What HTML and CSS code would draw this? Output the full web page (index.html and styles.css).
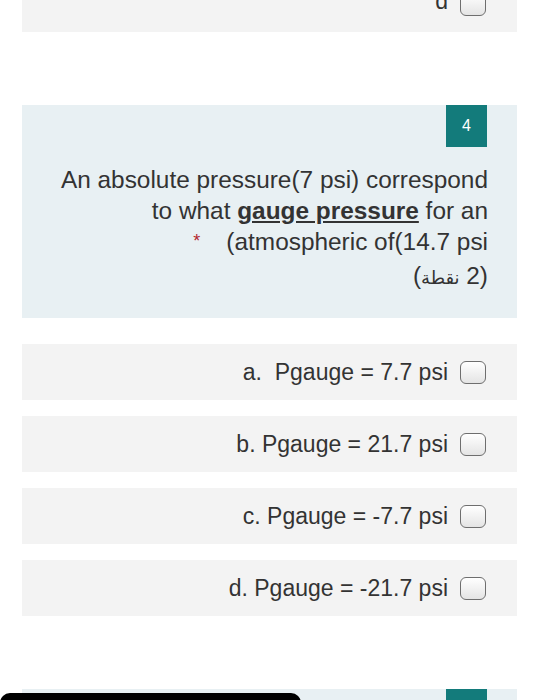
FILE: index.html
```html
<!DOCTYPE html>
<html lang="en">
<head>
<meta charset="utf-8">
<link rel="stylesheet" href="styles.css">
</head>
<body>
<div class="page">
  <div class="card option prev">
    <span class="label">d</span>
    <span class="box"></span>
  </div>

  <div class="card question">
    <div class="badge">4</div>
    <div class="qtext">
      <div>An absolute pressure(7 psi) correspond</div>
      <div>to what <b class="u">gauge pressure</b> for an</div>
      <div><span class="req">*</span>(atmospheric of(14.7 psi</div>
      <div>(<bdi class="ar">نقطة</bdi> 2)</div>
    </div>
  </div>

  <div class="options">
    <div class="card option"><span class="label">a.&nbsp; Pgauge = 7.7 psi</span><span class="box"></span></div>
    <div class="card option"><span class="label">b. Pgauge = 21.7 psi</span><span class="box"></span></div>
    <div class="card option"><span class="label">c. Pgauge = -7.7 psi</span><span class="box"></span></div>
    <div class="card option"><span class="label">d. Pgauge = -21.7 psi</span><span class="box"></span></div>
  </div>

  <div class="card question next">
    <div class="badge"></div>
  </div>
</div>
<div class="homebar"></div>
</body>
</html>
```

FILE: styles.css
```css
html, body {
  margin: 0;
  padding: 0;
  background: #ffffff;
  overflow: hidden;
}
body {
  font-family: "Liberation Sans", Arial, "Noto Sans", sans-serif;
  color: #333333;
  height: 700px;
  position: relative;
}
.page {
  padding: 0 22px;
  display: flex;
  flex-direction: column;
}
.card {
  background: #f3f3f3;
}
.option {
  height: 56px;
  display: flex;
  align-items: center;
  justify-content: flex-end;
  padding-right: 31px;
  gap: 12px;
  font-size: 23px;
}
.prev {
  height: 32px;
  align-items: flex-end;
  padding-bottom: 16px;
  box-sizing: border-box;
  overflow: hidden;
}
.prev .label {
  line-height: 16px;
  height: 16px;
  margin-bottom: 7px;
}
.box {
  width: 24px;
  height: 21px;
  border: 1.5px solid #6e6e6e;
  border-radius: 6px;
  background: linear-gradient(#ffffff, #e4e4e4);
  flex: none;
}
.question {
  margin-top: 73px;
  background: #e8f0f3;
  display: flex;
  flex-direction: column;
  align-items: flex-end;
  padding: 0 29px 25px 0;
}
.badge {
  width: 41px;
  height: 42px;
  background: #137b7b;
  color: #ffffff;
  font-size: 16px;
  display: flex;
  align-items: center;
  justify-content: center;
  margin-right: 1px;
}
.qtext {
  margin-top: 17px;
  text-align: right;
  font-size: 24.4px;
  line-height: 31px;
  color: #333333;
}
.u {
  text-decoration: underline;
  text-underline-offset: 2px;
}
.req {
  color: #b3262d;
  font-size: 18px;
  margin-right: 26px;
  position: relative;
  top: -3px;
}
.ar {
  font-family: "Noto Sans", "DejaVu Sans", sans-serif;
  font-size: 18px;
}
.options {
  margin-top: 26px;
  display: flex;
  flex-direction: column;
  gap: 16px;
}
.next {
  margin-top: 73px;
  height: 60px;
  padding: 0 29px 0 0;
}
.homebar {
  position: absolute;
  left: 0;
  top: 693px;
  width: 301px;
  height: 20px;
  background: #000000;
  border-radius: 10px 10px 0 0;
}
```
